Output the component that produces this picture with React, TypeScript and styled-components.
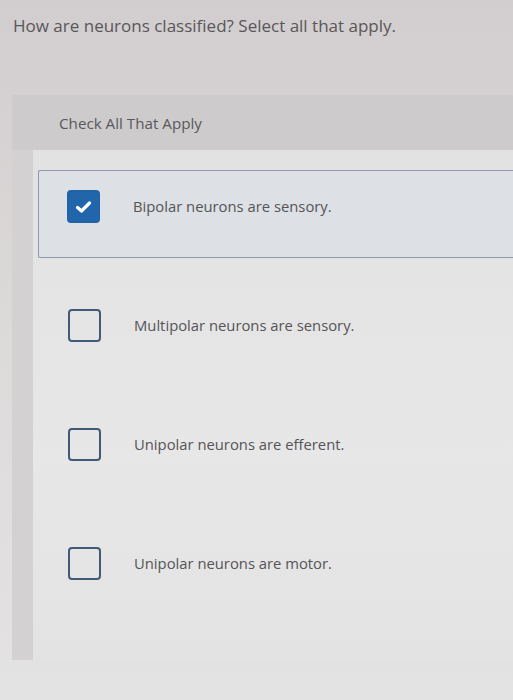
import React from 'react';
import styled, { createGlobalStyle } from 'styled-components';

const GlobalStyle = createGlobalStyle`
    html, body {
        margin: 0;
        padding: 0;
    }

    body {
        width: 513px;
        height: 700px;
        overflow: hidden;
        background: linear-gradient(180deg, #d2cdce 0%, #dcd9d9 45%, #e4e3e3 100%);
        font-family: "Open Sans", "Liberation Sans", Arial, sans-serif;
        color: #555456;
    }
`;

const Page = styled.div`
    display: flex;
    flex-direction: column;
    height: 700px;
`;

const Question = styled.div`
    padding: 14px 0 0 13px;
    height: 95px;
    box-sizing: border-box;
    font-size: 17px;
    color: #59575a;
`;

const Panel = styled.div`
    margin-left: 12px;
    display: flex;
    flex-direction: column;
    height: 565px;
    background: #d3d1d2;
`;

const PanelHeader = styled.div`
    height: 55px;
    display: flex;
    align-items: center;
    padding-left: 47px;
    font-size: 15.2px;
    color: #5a585b;
    background: #cdcbcc;
`;

const Options = styled.div`
    flex: 1;
    margin-left: 21px;
    padding: 20px 0 0 5px;
    display: flex;
    flex-direction: column;
    gap: 31px;
    background: linear-gradient(180deg, #e2e2e2 0%, #e7e7e7 60%, #e3e3e3 100%);
`;

const Option = styled.div<{ $selected: boolean }>`
    height: 88px;
    box-sizing: border-box;
    display: flex;
    align-items: flex-start;
    padding: 19px 0 0 ${(props) => (props.$selected ? '28px' : '29px')};
    border: 1px solid ${(props) => (props.$selected ? '#8e9aab' : 'transparent')};
    border-right: none;
    border-radius: 2px 0 0 2px;
    background: ${(props) => (props.$selected ? '#dde0e4' : 'transparent')};
`;

const Box = styled.div<{ $checked: boolean }>`
    width: 33px;
    height: 33px;
    box-sizing: border-box;
    border-radius: 4px;
    border: 2px solid ${(props) => (props.$checked ? '#2063a6' : '#415a77')};
    background: ${(props) => (props.$checked ? '#2166aa' : 'transparent')};
    display: flex;
    align-items: center;
    justify-content: center;
    flex-shrink: 0;
`;

const Label = styled.div`
    margin-left: 33px;
    line-height: 33px;
    font-size: 14.8px;
    color: #555457;
`;

const CheckMark = () => (
    <svg width="17" height="14" viewBox="0 0 17 14">
        <path
            d="M2.5 7.5 L6.5 11 L14.5 3"
            fill="none"
            stroke="#ffffff"
            strokeWidth="3.2"
            strokeLinecap="round"
            strokeLinejoin="round"
        />
    </svg>
);

const answers = [
    { text: 'Bipolar neurons are sensory.', checked: true },
    { text: 'Multipolar neurons are sensory.', checked: false },
    { text: 'Unipolar neurons are efferent.', checked: false },
    { text: 'Unipolar neurons are motor.', checked: false },
];

export default function App() {
    return (
        <>
            <GlobalStyle />
            <Page>
                <Question>How are neurons classified? Select all that apply.</Question>
                <Panel>
                    <PanelHeader>Check All That Apply</PanelHeader>
                    <Options>
                        {answers.map((answer) => (
                            <Option key={answer.text} $selected={answer.checked}>
                                <Box $checked={answer.checked}>
                                    {answer.checked && <CheckMark />}
                                </Box>
                                <Label>{answer.text}</Label>
                            </Option>
                        ))}
                    </Options>
                </Panel>
            </Page>
        </>
    );
}
